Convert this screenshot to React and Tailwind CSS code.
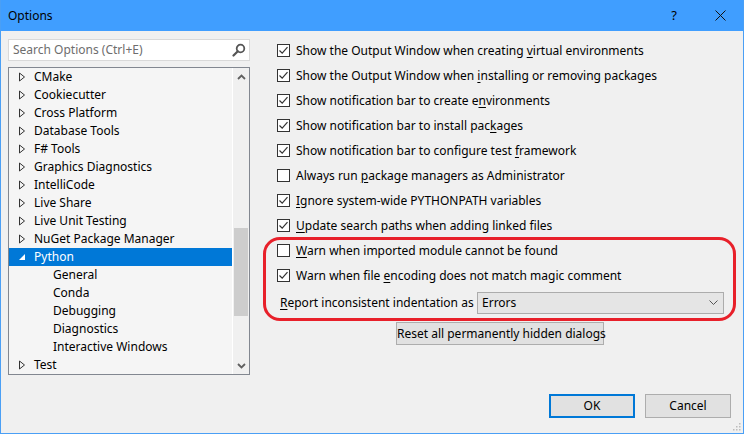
import { useState } from 'react'

const font = { fontFamily: '"Noto Sans", "Segoe UI", sans-serif' }

const treeItems = [
  { label: 'CMake' },
  { label: 'Cookiecutter' },
  { label: 'Cross Platform' },
  { label: 'Database Tools' },
  { label: 'F# Tools' },
  { label: 'Graphics Diagnostics' },
  { label: 'IntelliCode' },
  { label: 'Live Share' },
  { label: 'Live Unit Testing' },
  { label: 'NuGet Package Manager' },
  { label: 'Python', open: true, selected: true },
  { label: 'General', child: true },
  { label: 'Conda', child: true },
  { label: 'Debugging', child: true },
  { label: 'Diagnostics', child: true },
  { label: 'Interactive Windows', child: true },
  { label: 'Test' },
]

// [before, mnemonic, after, checked]
const options = [
  ['Show the Output Window when creating ', 'v', 'irtual environments', true],
  ['Show the Output Window when ', 'i', 'nstalling or removing packages', true],
  ['Show notification bar to create e', 'n', 'vironments', true],
  ['Show notification bar to install pac', 'k', 'ages', true],
  ['Show notification bar to configure test ', 'f', 'ramework', true],
  ['Always run ', 'p', 'ackage managers as Administrator', false],
  ['', 'I', 'gnore system-wide PYTHONPATH variables', true],
  ['', 'U', 'pdate search paths when adding linked files', true],
]

function Checkbox({ checked, onClick }) {
  return (
    <span onClick={onClick} className="w-[13px] h-[13px] border border-[#333333] bg-white flex items-center justify-center shrink-0">
      {checked && (
        <svg width="11" height="11" viewBox="0 0 11 11">
          <path d="M1.5 5.5 L4.2 8.2 L9.5 2.2" fill="none" stroke="#333333" strokeWidth="1.2" />
        </svg>
      )}
    </span>
  )
}

function OptionRow({ before, key_, after, checked }) {
  const [on, setOn] = useState(checked)
  return (
    <div className="h-[25px] flex items-center gap-[6px] pl-[14px]">
      <Checkbox checked={on} onClick={() => setOn(!on)} />
      <span className="whitespace-nowrap">
        {before}<span className="underline underline-offset-2">{key_}</span>{after}
      </span>
    </div>
  )
}

function TreeRow({ item }) {
  if (item.child) {
    return (
      <div className="h-[18px] flex items-center pl-[44px] whitespace-nowrap text-black">{item.label}</div>
    )
  }
  return (
    <div className={'h-[18px] flex items-center pl-[1px] whitespace-nowrap ' + (item.selected ? 'bg-[#0078d7] text-white' : 'text-black')}>
      <span className="w-[24px] flex justify-center">
        {item.open ? (
          <svg width="8" height="8" viewBox="0 0 8 8"><path d="M7 1 L7 7 L1 7 Z" fill="white" /></svg>
        ) : (
          <svg width="8" height="10" viewBox="0 0 8 10"><path d="M1.5 1 L6.5 5 L1.5 9 Z" fill="none" stroke="#333" strokeWidth="1" /></svg>
        )}
      </span>
      {item.label}
    </div>
  )
}

export default function App() {
  const [warn1, setWarn1] = useState(false)
  const [warn2, setWarn2] = useState(true)

  return (
    <div style={font} className="w-[744px] h-[434px] flex flex-col bg-[#f0f0f0] text-[12px] text-black border-x border-b border-[#4a9ff5] overflow-hidden">
      {/* title bar */}
      <div className="h-[31px] bg-[#409eff] flex items-center pl-[8px] shrink-0 -mx-px">
        <span className="flex-1">Options</span>
        <span className="w-[46px] text-center text-[13px] ml-[4px]">?</span>
        <span className="w-[46px] flex justify-center mr-[1px]">
          <svg width="11" height="11" viewBox="0 0 11 11"><path d="M0.5 0.5 L10.5 10.5 M10.5 0.5 L0.5 10.5" stroke="#111" strokeWidth="1" /></svg>
        </span>
      </div>

      <div className="flex flex-1">
        {/* left pane */}
        <div className="w-[254px] pl-[7px] pt-[8px] flex flex-col gap-[6px]">
          <div className="h-[22px] w-[242px] bg-white border border-[#d9d9d9] flex items-center pl-[4px] pr-[3px]">
            <span className="flex-1 text-[#6d6d6d]">Search Options (Ctrl+E)</span>
            <svg width="14" height="14" viewBox="0 0 14 14">
              <circle cx="8.5" cy="5.5" r="3.8" fill="none" stroke="#555" strokeWidth="1.8" />
              <path d="M5.8 8.2 L1.5 12.5" stroke="#555" strokeWidth="2.2" strokeLinecap="round" />
            </svg>
          </div>
          <div className="h-[308px] w-[242px] border border-[#828790] bg-[#f5f5f5] flex">
            <div className="flex-1 flex flex-col pt-0">
              {treeItems.map((item) => <TreeRow key={item.label} item={item} />)}
            </div>
            <div className="w-[17px] bg-[#f0f0f0] border-l border-white flex flex-col items-center">
              <div className="h-[17px] flex items-center justify-center">
                <svg width="9" height="6" viewBox="0 0 9 6"><path d="M1 5 L4.5 1.5 L8 5" fill="none" stroke="#606060" strokeWidth="1.8" /></svg>
              </div>
              <div className="flex-1 w-full flex flex-col px-[1px]">
                <div className="h-[143px]" />
                <div className="h-[88px] bg-[#cdcdcd]" />
              </div>
              <div className="h-[17px] flex items-center justify-center">
                <svg width="9" height="6" viewBox="0 0 9 6"><path d="M1 1 L4.5 4.5 L8 1" fill="none" stroke="#606060" strokeWidth="1.8" /></svg>
              </div>
            </div>
          </div>
        </div>

        {/* right pane */}
        <div className="w-[474px] ml-[8px] pt-[7px] flex flex-col">
          {options.map(([b, k, a, c]) => (
            <OptionRow key={b + k} before={b} key_={k} after={a} checked={c} />
          ))}
          <div className="relative mt-0">
            <div className="absolute left-0 right-[1px] top-[-1px] bottom-[-7px] border-[3px] border-[#e8202a] rounded-[17px]" />
            <div className="h-[25px] flex items-center gap-[6px] pl-[14px]">
              <Checkbox checked={warn1} onClick={() => setWarn1(!warn1)} />
              <span><span className="underline underline-offset-2">W</span>arn when imported module cannot be found</span>
            </div>
            <div className="h-[25px] flex items-center gap-[6px] pl-[14px]">
              <Checkbox checked={warn2} onClick={() => setWarn2(!warn2)} />
              <span>Warn when file <span className="underline underline-offset-2">e</span>ncoding does not match magic comment</span>
            </div>
            <div className="h-[22px] mt-[4px] flex items-center pl-[17px]">
              <span className="w-[197px]"><span className="underline underline-offset-2">R</span>eport inconsistent indentation as</span>
              <div className="w-[247px] h-[22px] bg-[#e5e5e5] border border-[#acacac] flex items-center pl-[4px] pr-[5px]">
                <span className="flex-1">Errors</span>
                <svg width="9" height="6" viewBox="0 0 9 6"><path d="M0.5 0.5 L4.5 4.5 L8.5 0.5" fill="none" stroke="#555" strokeWidth="1" /></svg>
              </div>
            </div>
          </div>
          <div className="flex justify-center mt-[8px]">
            <button className="h-[23px] w-[208px] px-0 whitespace-nowrap bg-[#e1e1e1] border border-[#adadad]">Reset all permanently hidden dialogs</button>
          </div>
        </div>
      </div>

      {/* footer */}
      <div className="flex justify-end gap-[10px] pr-[12px] pb-[15px] relative">
        <button className="w-[86px] h-[24px] bg-[#e1e1e1] border-2 border-[#0078d7]">OK</button>
        <button className="w-[86px] h-[24px] bg-[#e1e1e1] border border-[#adadad]">Cancel</button>
        <svg className="absolute right-[2px] bottom-[2px]" width="8" height="8" viewBox="0 0 8 8">
          <g fill="#bcbcbc">
            <rect x="6" y="0" width="1.5" height="1.5" />
            <rect x="3" y="3" width="1.5" height="1.5" />
            <rect x="6" y="3" width="1.5" height="1.5" />
            <rect x="0" y="6" width="1.5" height="1.5" />
            <rect x="3" y="6" width="1.5" height="1.5" />
            <rect x="6" y="6" width="1.5" height="1.5" />
          </g>
        </svg>
      </div>
    </div>
  )
}
